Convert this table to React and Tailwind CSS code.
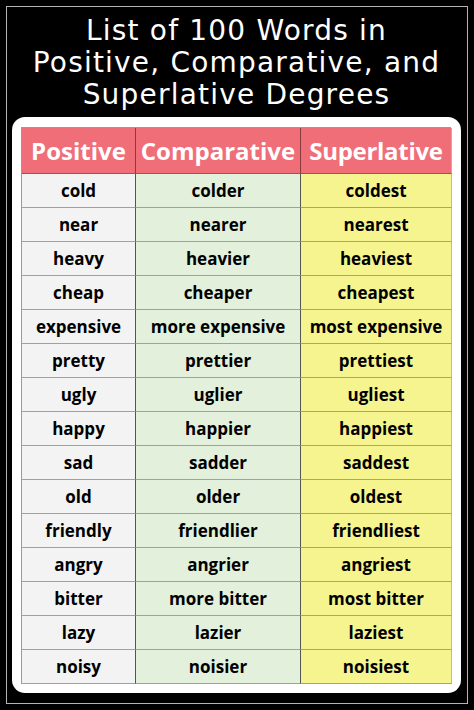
import React from "react";

const rows = [
  ["cold", "colder", "coldest"],
  ["near", "nearer", "nearest"],
  ["heavy", "heavier", "heaviest"],
  ["cheap", "cheaper", "cheapest"],
  ["expensive", "more expensive", "most expensive"],
  ["pretty", "prettier", "prettiest"],
  ["ugly", "uglier", "ugliest"],
  ["happy", "happier", "happiest"],
  ["sad", "sadder", "saddest"],
  ["old", "older", "oldest"],
  ["friendly", "friendlier", "friendliest"],
  ["angry", "angrier", "angriest"],
  ["bitter", "more bitter", "most bitter"],
  ["lazy", "lazier", "laziest"],
  ["noisy", "noisier", "noisiest"],
];

const colBg = ["bg-[#f3f3f3]", "bg-[#e2f0dc]", "bg-[#f6f48e]"];

export default function App() {
  return (
    <div className="w-[474px] h-[710px] bg-black p-[6px]" style={{ fontFamily: '"Open Sans", "Noto Sans", sans-serif' }}>
      <div className="h-full border border-[#b5b5b5] flex flex-col pl-[5px] pr-[6px]">
        <div className="h-[110px] flex flex-col items-center justify-center pt-[1px] text-white text-[28px] font-normal text-center tracking-[1.2px]" style={{ fontFamily: '"DejaVu Sans", sans-serif' }}>
          <div className="leading-[32px]">List of 100 Words in</div>
          <div className="leading-[32px]">Positive, Comparative, and</div>
          <div className="leading-[32px]">Superlative Degrees</div>
        </div>
        <div className="bg-white rounded-[13px] h-[576px] pl-[9px] pr-[10px] py-[10px]">
          <div className="grid grid-cols-[114px_165px_151px] border-l border-t border-[#9a9a9a]">
            {["Positive", "Comparative", "Superlative"].map((h, i) => (
              <div
                key={h}
                className={`h-[46px] flex items-center justify-center bg-[#f06e78] text-white font-bold text-[24px] border-b border-[#b14a52] ${i === 2 ? "tracking-[-0.3px] border-r border-r-[#e0a0a4]" : "border-r border-r-[#8a3b40]"}`}
              >
                {h}
              </div>
            ))}
            {rows.map((r, ri) =>
              r.map((c, ci) => (
                <div
                  key={ri + "-" + ci}
                  className={`h-[34px] flex items-center justify-center text-black font-bold text-[17px] border-b border-[#a0a0a0] ${colBg[ci]} ${ci < 2 ? "border-r border-r-[#555555]" : "border-r border-r-[#b8b8b8]"}`}
                >
                  {c}
                </div>
              ))
            )}
          </div>
        </div>
      </div>
    </div>
  );
}
